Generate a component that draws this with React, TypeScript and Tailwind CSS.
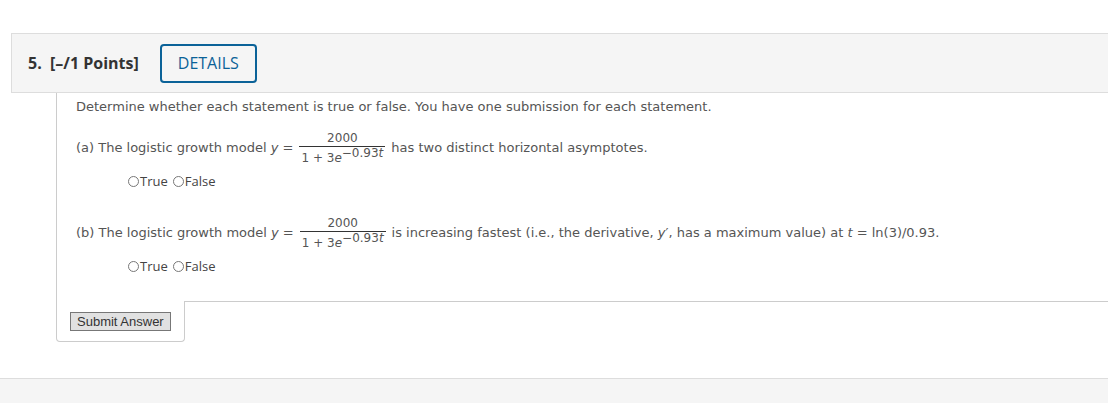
function Fraction() {
  return (
    <span className="mx-[6px] inline-flex flex-col items-center align-middle leading-none">
      <span className="px-[2px] pb-[2px] text-[12px]">2000</span>
      <span className="border-t border-[#333] px-[2px] pt-[5px] text-[12px]">
        1 + 3<i>e</i>
        <span className="relative -top-[5px] text-[12px]">
          −0.93<i>t</i>
        </span>
      </span>
    </span>
  );
}

function Choices() {
  return (
    <div className="flex items-center pl-[52px] text-[13px] text-[#444]" style={{ fontFamily: '"Open Sans", sans-serif' }}>
      <span className="h-[11px] w-[11px] rounded-full border border-[#777]" />
      <span className="ml-[1px]">True</span>
      <span className="ml-[5px] h-[11px] w-[11px] rounded-full border border-[#777]" />
      <span className="ml-[1px]">False</span>
    </div>
  );
}

export default function App() {
  return (
    <div className="h-[403px] w-[1108px] overflow-hidden bg-white">
      <div className="h-[33px]" />

      <div
        className="ml-[11px] flex h-[60px] items-center border border-r-0 border-[#ddd] bg-[#f5f5f5] pl-[16px]"
        style={{ fontFamily: '"Open Sans", sans-serif' }}
      >
        <span className="text-[16px] font-bold text-[#333]">
          5.&nbsp; [–/1 Points]
        </span>
        <button className="ml-[21px] h-[39px] w-[97px] rounded-[4px] border-2 border-[#0b6298] text-[16px] font-medium text-[#0b6298]">
          DETAILS
        </button>
      </div>

      <div
        className="ml-[56px] text-[13px] text-[#555]"
        style={{ fontFamily: '"DejaVu Sans", Verdana, sans-serif' }}
      >
        <div className="h-[208px] border-l border-[#ccc] pl-[19px] pt-[5px]">
          <p className="leading-[18px]">
            Determine whether each statement is true or false. You have one submission for each statement.
          </p>

          <p className="mt-[16px] flex items-center">
            <span>
              (a) The logistic growth model <i>y</i> =
            </span>
            <Fraction />
            <span>has two distinct horizontal asymptotes.</span>
          </p>
          <div className="mt-[8px]">
            <Choices />
          </div>

          <p className="mt-[25px] flex items-center">
            <span>
              (b) The logistic growth model <i>y</i> =
            </span>
            <Fraction />
            <span>
              is increasing fastest (i.e., the derivative, <i>y</i>′, has a maximum value) at <i>t</i> = ln(3)/0.93.
            </span>
          </p>
          <div className="mt-[8px]">
            <Choices />
          </div>
        </div>

        <div className="flex">
          <div className="flex h-[41px] w-[129px] items-center rounded-b-[4px] border border-t-0 border-[#ccc] pl-[13px]">
            <button
              className="h-[19px] border border-[#777] bg-[#e1e1e1] px-[6px] text-[13px] leading-none text-[#333]"
              style={{ fontFamily: '"Liberation Sans", Arial, sans-serif' }}
            >
              Submit Answer
            </button>
          </div>
          <div className="flex-1 border-t border-[#ccc]" />
        </div>
      </div>

      <div className="mt-[36px] h-[30px] border-t border-[#ddd] bg-[#f5f5f5]" />
    </div>
  );
}
